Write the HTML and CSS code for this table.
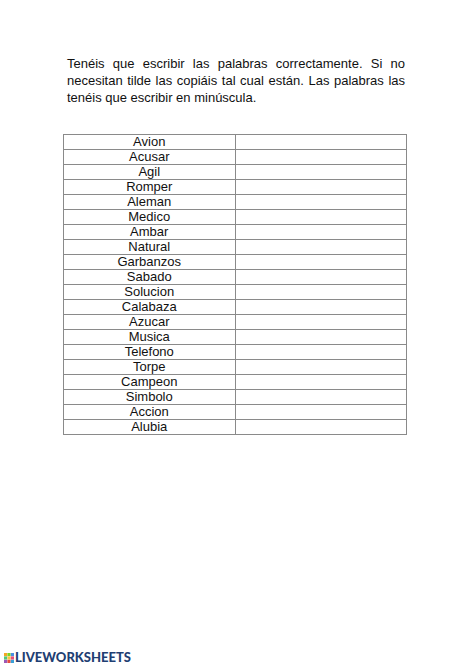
FILE: index.html
```html
<!DOCTYPE html>
<html lang="es">
<head>
<meta charset="utf-8">
<link rel="stylesheet" href="styles.css">
</head>
<body>
<div class="page">
  <p class="intro">Tenéis que escribir las palabras correctamente. Si no necesitan tilde las copiáis tal cual están. Las palabras las tenéis que escribir en minúscula.</p>
  <table class="words">
    <tr><td>Avion</td><td></td></tr>
    <tr><td>Acusar</td><td></td></tr>
    <tr><td>Agil</td><td></td></tr>
    <tr><td>Romper</td><td></td></tr>
    <tr><td>Aleman</td><td></td></tr>
    <tr><td>Medico</td><td></td></tr>
    <tr><td>Ambar</td><td></td></tr>
    <tr><td>Natural</td><td></td></tr>
    <tr><td>Garbanzos</td><td></td></tr>
    <tr><td>Sabado</td><td></td></tr>
    <tr><td>Solucion</td><td></td></tr>
    <tr><td>Calabaza</td><td></td></tr>
    <tr><td>Azucar</td><td></td></tr>
    <tr><td>Musica</td><td></td></tr>
    <tr><td>Telefono</td><td></td></tr>
    <tr><td>Torpe</td><td></td></tr>
    <tr><td>Campeon</td><td></td></tr>
    <tr><td>Simbolo</td><td></td></tr>
    <tr><td>Accion</td><td></td></tr>
    <tr><td>Alubia</td><td></td></tr>
  </table>
  <div class="footer">
    <svg class="logo-icon" width="10" height="10" viewBox="0 0 11 11">
      <rect x="0" y="0" width="3.5" height="3.5" fill="#f5a623"/>
      <rect x="3.75" y="0" width="3.5" height="3.5" fill="#7ed321"/>
      <rect x="7.5" y="0" width="3.5" height="3.5" fill="#4a90e2"/>
      <rect x="0" y="3.75" width="3.5" height="3.5" fill="#50c878"/>
      <rect x="3.75" y="3.75" width="3.5" height="3.5" fill="#f8c63d"/>
      <rect x="7.5" y="3.75" width="3.5" height="3.5" fill="#e94e77"/>
      <rect x="0" y="7.5" width="3.5" height="3.5" fill="#9b59b6"/>
      <rect x="3.75" y="7.5" width="3.5" height="3.5" fill="#e74c3c"/>
      <rect x="7.5" y="7.5" width="3.5" height="3.5" fill="#3aa0d8"/>
    </svg>
    <span class="logo-text">LIVEWORKSHEETS</span>
  </div>
</div>
</body>
</html>
```

FILE: styles.css
```css
html, body {
  margin: 0;
  padding: 0;
  background: #ffffff;
}

.page {
  width: 474px;
  height: 669px;
  display: flex;
  flex-direction: column;
  font-family: "Liberation Sans", Arial, sans-serif;
  color: #111;
  box-sizing: border-box;
}

.intro {
  margin: 55px 0 0 67px;
  width: 338px;
  font-size: 13px;
  line-height: 17px;
  text-align: justify;
}

.words {
  margin: 28px 0 0 63px;
  width: 344px;
  border-collapse: collapse;
  table-layout: fixed;
}

.words td {
  border: 1px solid #8a8a8a;
  height: 14px;
  padding: 0;
  font-size: 13px;
  line-height: 14px;
  text-align: center;
  width: 50%;
}

.footer {
  margin-top: auto;
  margin-bottom: 5px;
  display: flex;
  align-items: center;
  gap: 1px;
  padding-left: 4px;
}

.logo-icon {
  display: block;
}

.logo-text {
  font-family: Lato, "Open Sans", sans-serif;
  font-weight: 900;
  font-size: 13px;
  line-height: 13px;
  color: #1f3f73;
}
```
